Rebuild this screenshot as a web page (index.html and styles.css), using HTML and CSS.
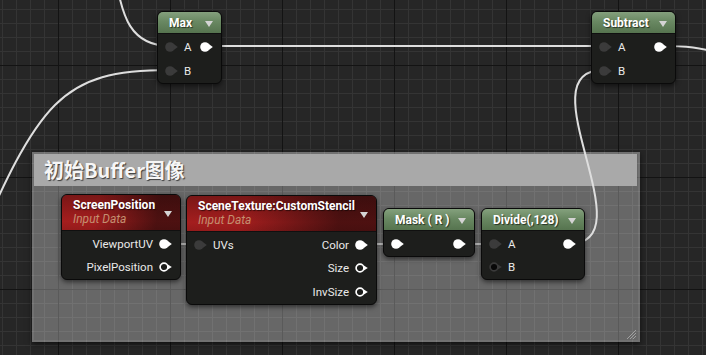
FILE: index.html
```html
<!DOCTYPE html>
<html lang="zh">
<head>
    <meta charset="UTF-8">
    <meta name="viewport" content="width=device-width, initial-scale=1.0">
    <title>Material Graph</title>
    <link rel="stylesheet" href="styles.css">
</head>
<body>
    <svg class="defs" width="0" height="0">
        <defs>
            <symbol id="pin-full" viewBox="0 0 13 10">
                <circle cx="5" cy="5" r="4.8" fill="#ffffff"/>
                <path d="M8.5 1.8 L12.8 5 L8.5 8.2 Z" fill="#ffffff"/>
            </symbol>
            <symbol id="pin-ring" viewBox="0 0 13 10">
                <circle cx="5" cy="5" r="3.9" fill="#1c1d1b" stroke="#ffffff" stroke-width="1.7"/>
                <path d="M8.8 2.4 L12.8 5 L8.8 7.6 Z" fill="#ffffff"/>
            </symbol>
            <symbol id="pin-off" viewBox="0 0 13 10">
                <circle cx="5" cy="5" r="4.8" fill="#3b3b3b"/>
                <path d="M8.5 1.8 L12.8 5 L8.5 8.2 Z" fill="#3b3b3b"/>
            </symbol>
            <symbol id="pin-dark" viewBox="0 0 13 10">
                <circle cx="5" cy="5" r="3.9" fill="#080808" stroke="#3a3a3a" stroke-width="1.7"/>
                <path d="M8.8 2.4 L12.8 5 L8.8 7.6 Z" fill="#3a3a3a"/>
            </symbol>
        </defs>
    </svg>

    <div class="graph">
        <!-- comment box -->
        <div class="comment">
            <div class="comment-head">初始Buffer图像</div>
            <svg class="comment-grip" width="11" height="11" viewBox="0 0 11 11">
                <path d="M1 10 L10 1 M4 10 L10 4 M7 10 L10 7" stroke="#a0a0a0" stroke-width="1"/>
            </svg>
        </div>

        <!-- wires -->
        <svg class="wires" width="706" height="355" viewBox="0 0 706 355">
            <path class="wire" d="M116 -20 C122 15, 130 46, 170 46"/>
            <path class="wire" d="M170 70 C60 70, 40 100, -30 260"/>
            <path class="wire" d="M206 46 L603 46"/>
            <path class="wire" d="M659 46 C690 46, 700 48, 715 52"/>
            <path class="wire" d="M569 244 C649 244, 523 70, 603 70"/>
            <path class="wire wire-thin" d="M165 244 L200 244"/>
            <path class="wire wire-thin" d="M363 244 L396 244"/>
            <path class="wire wire-thin" d="M459 244 L494 244"/>
        </svg>

        <!-- Max -->
        <div class="node node-max">
            <div class="node-head head-green">
                <span class="node-title">Max</span>
                <span class="caret"></span>
            </div>
            <div class="node-body">
                <div class="pin-row">
                    <span class="pin-in"><svg class="pin"><use href="#pin-off"/></svg>A</span>
                    <span class="pin-out"><svg class="pin"><use href="#pin-full"/></svg></span>
                </div>
                <div class="pin-row">
                    <span class="pin-in"><svg class="pin"><use href="#pin-off"/></svg>B</span>
                </div>
            </div>
        </div>

        <!-- Subtract -->
        <div class="node node-subtract">
            <div class="node-head head-green">
                <span class="node-title">Subtract</span>
                <span class="caret"></span>
            </div>
            <div class="node-body">
                <div class="pin-row">
                    <span class="pin-in"><svg class="pin"><use href="#pin-off"/></svg>A</span>
                    <span class="pin-out"><svg class="pin"><use href="#pin-full"/></svg></span>
                </div>
                <div class="pin-row">
                    <span class="pin-in"><svg class="pin"><use href="#pin-off"/></svg>B</span>
                </div>
            </div>
        </div>

        <!-- ScreenPosition -->
        <div class="node node-screenpos">
            <div class="node-head head-red">
                <div class="head-text">
                    <span class="node-title">ScreenPosition</span>
                    <span class="node-sub">Input Data</span>
                </div>
                <span class="caret"></span>
            </div>
            <div class="node-body body-tight">
                <div class="pin-row">
                    <span class="pin-out">ViewportUV<svg class="pin"><use href="#pin-full"/></svg></span>
                </div>
                <div class="pin-row">
                    <span class="pin-out">PixelPosition<svg class="pin"><use href="#pin-ring"/></svg></span>
                </div>
            </div>
        </div>

        <!-- SceneTexture -->
        <div class="node node-scenetex">
            <div class="node-head head-red">
                <div class="head-text">
                    <span class="node-title">SceneTexture:CustomStencil</span>
                    <span class="node-sub">Input Data</span>
                </div>
                <span class="caret"></span>
            </div>
            <div class="node-body body-tight">
                <div class="pin-row">
                    <span class="pin-in"><svg class="pin"><use href="#pin-off"/></svg>UVs</span>
                    <span class="pin-out">Color<svg class="pin"><use href="#pin-full"/></svg></span>
                </div>
                <div class="pin-row">
                    <span class="pin-out">Size<svg class="pin"><use href="#pin-ring"/></svg></span>
                </div>
                <div class="pin-row">
                    <span class="pin-out">InvSize<svg class="pin"><use href="#pin-ring"/></svg></span>
                </div>
            </div>
        </div>

        <!-- Mask -->
        <div class="node node-mask">
            <div class="node-head head-green">
                <span class="node-title">Mask ( R )</span>
                <span class="caret"></span>
            </div>
            <div class="node-body body-tight">
                <div class="pin-row">
                    <span class="pin-in"><svg class="pin"><use href="#pin-full"/></svg></span>
                    <span class="pin-out"><svg class="pin"><use href="#pin-full"/></svg></span>
                </div>
            </div>
        </div>

        <!-- Divide -->
        <div class="node node-divide">
            <div class="node-head head-green">
                <span class="node-title">Divide(,128)</span>
                <span class="caret"></span>
            </div>
            <div class="node-body body-tight">
                <div class="pin-row">
                    <span class="pin-in"><svg class="pin"><use href="#pin-off"/></svg>A</span>
                    <span class="pin-out"><svg class="pin"><use href="#pin-full"/></svg></span>
                </div>
                <div class="pin-row">
                    <span class="pin-in"><svg class="pin"><use href="#pin-dark"/></svg>B</span>
                </div>
            </div>
        </div>
    </div>
</body>
</html>
```

FILE: styles.css
```css
* {
    box-sizing: border-box;
}

body {
    margin: 0;
    padding: 0;
    width: 706px;
    height: 355px;
    overflow: hidden;
    background-color: #262626;
    font-family: Roboto, "Noto Sans", sans-serif;
}

.defs {
    position: absolute;
}

.graph {
    position: relative;
    width: 706px;
    height: 355px;
    background-color: #262626;
    background-image:
        linear-gradient(#131313 1px, transparent 1px),
        linear-gradient(90deg, #131313 1px, transparent 1px),
        linear-gradient(#343434 1px, transparent 1px),
        linear-gradient(90deg, #343434 1px, transparent 1px);
    background-size: 112px 112px, 112px 112px, 14px 14px, 14px 14px;
    background-position: 0 65px, 58px 0, 0 9px, 2px 0;
}

/* comment box */
.comment {
    position: absolute;
    left: 32px;
    top: 152px;
    width: 608px;
    height: 190px;
    padding: 2px 3px 0 2px;
    background-color: rgba(255, 255, 255, 0.3);
    box-shadow: 0 2px 6px rgba(0, 0, 0, 0.6), inset 0 0 0 2px rgba(255, 255, 255, 0.07);
}

.comment-head {
    height: 32px;
    padding-left: 10px;
    background-color: #a9a9a9;
    color: #f6f6f6;
    font-family: "Noto Sans CJK SC", sans-serif;
    font-weight: bold;
    font-size: 20px;
    line-height: 32px;
    text-shadow: 1px 1px 1px #3c3c3c;
}

.comment-grip {
    position: absolute;
    right: 3px;
    bottom: 2px;
}

/* wires */
.wires {
    position: absolute;
    left: 0;
    top: 0;
}

.wire {
    fill: none;
    stroke: #dedede;
    stroke-width: 2;
}

.wire-thin {
    stroke-width: 1.5;
}

/* nodes */
.node {
    position: absolute;
    background-color: #1d1e1c;
    border: 1px solid #0a0a0a;
    border-radius: 6px;
    box-shadow: 0 2px 5px rgba(0, 0, 0, 0.55);
    overflow: hidden;
    color: #e9e9e9;
    font-size: 11.5px;
}

.node-max {
    left: 157px;
    top: 11px;
    width: 65px;
}

.node-subtract {
    left: 591px;
    top: 11px;
    width: 85px;
}

.node-screenpos {
    left: 61px;
    top: 194px;
    width: 120px;
}

.node-scenetex {
    left: 186px;
    top: 195px;
    width: 191px;
}

.node-mask {
    left: 383px;
    top: 208px;
    width: 92px;
}

.node-divide {
    left: 481px;
    top: 208px;
    width: 104px;
}

.node-head {
    display: flex;
    justify-content: space-between;
    align-items: center;
    padding: 0 8px 0 11px;
    border-bottom: 1px solid #101010;
}

.head-green {
    height: 22px;
    background: linear-gradient(#84a07d, #698862 45%, #56744f);
}

.head-red {
    height: 36px;
    padding-left: 11px;
    background:
        linear-gradient(100deg, rgba(0, 0, 0, 0) 30%, rgba(20, 8, 8, 0.6) 80%),
        linear-gradient(#7a1616, #a41e1e 75%, #951b1b);
}

.head-text {
    display: flex;
    flex-direction: column;
}

.node-title {
    font-size: 12px;
    font-weight: bold;
    line-height: 14px;
    color: #ffffff;
    text-shadow: 1px 1px 1px rgba(0, 0, 0, 0.6);
    white-space: nowrap;
}

.node-sub {
    font-size: 12px;
    font-style: italic;
    line-height: 15px;
    color: #c48f70;
}

.caret {
    width: 0;
    height: 0;
    margin-top: 2px;
    border-left: 4px solid transparent;
    border-right: 4px solid transparent;
    border-top: 6px solid #d4d4d4;
}

.node-body {
    padding: 1px 0 0;
}

.pin-row {
    display: flex;
    align-items: center;
    height: 24px;
    padding: 0 8px 0 7px;
}

.body-tight .pin-row {
    height: 23.5px;
}

.pin-in,
.pin-out {
    display: flex;
    align-items: center;
    gap: 6px;
    white-space: nowrap;
}

.pin-out {
    margin-left: auto;
}

.pin {
    width: 13px;
    height: 10px;
}
```
